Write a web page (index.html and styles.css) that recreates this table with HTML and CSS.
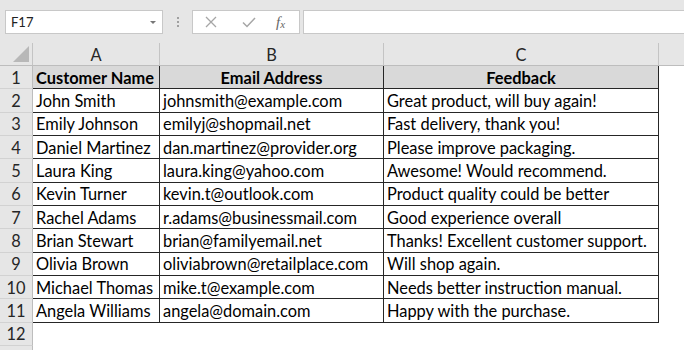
FILE: index.html
```html
<!DOCTYPE html>
<html>
<head>
<meta charset="utf-8">
<link rel="stylesheet" href="styles.css">
</head>
<body>
<div class="app">
  <div class="fbar">
    <div class="namebox"><span class="ref">F17</span><span class="caret"></span></div>
    <div class="grip"><i></i><i></i><i></i></div>
    <div class="btns">
      <svg class="ico" width="14" height="14" viewBox="0 0 14 14"><path d="M2 2L12 12M12 2L2 12" stroke="#a6a6a6" stroke-width="1.3" fill="none"/></svg>
      <svg class="ico" width="16" height="14" viewBox="0 0 16 14"><path d="M2 7.5L6 11.5L14 3" stroke="#a6a6a6" stroke-width="1.5" fill="none"/></svg>
      <span class="fx">f<sub>x</sub></span>
    </div>
    <div class="input"></div>
  </div>
  <div class="sheet">
    <div class="corner"><span class="tri"></span></div>
    <div class="ch">A</div><div class="ch">B</div><div class="ch">C</div><div class="ch last"></div>

    <div class="rh">1</div><div class="c hd">Customer Name</div><div class="c hd ctr">Email Address</div><div class="c hd ctr">Feedback</div><div class="e"></div>
    <div class="rh">2</div><div class="c">John Smith</div><div class="c">johnsmith@example.com</div><div class="c">Great product, will buy again!</div><div class="e"></div>
    <div class="rh">3</div><div class="c">Emily Johnson</div><div class="c">emilyj@shopmail.net</div><div class="c">Fast delivery, thank you!</div><div class="e"></div>
    <div class="rh">4</div><div class="c">Daniel Martinez</div><div class="c">dan.martinez@provider.org</div><div class="c">Please improve packaging.</div><div class="e"></div>
    <div class="rh">5</div><div class="c">Laura King</div><div class="c">laura.king@yahoo.com</div><div class="c">Awesome! Would recommend.</div><div class="e"></div>
    <div class="rh">6</div><div class="c">Kevin Turner</div><div class="c">kevin.t@outlook.com</div><div class="c">Product quality could be better</div><div class="e"></div>
    <div class="rh">7</div><div class="c">Rachel Adams</div><div class="c">r.adams@businessmail.com</div><div class="c">Good experience overall</div><div class="e"></div>
    <div class="rh">8</div><div class="c">Brian Stewart</div><div class="c">brian@familyemail.net</div><div class="c">Thanks! Excellent customer support.</div><div class="e"></div>
    <div class="rh">9</div><div class="c">Olivia Brown</div><div class="c">oliviabrown@retailplace.com</div><div class="c">Will shop again.</div><div class="e"></div>
    <div class="rh">10</div><div class="c">Michael Thomas</div><div class="c">mike.t@example.com</div><div class="c">Needs better instruction manual.</div><div class="e"></div>
    <div class="rh">11</div><div class="c">Angela Williams</div><div class="c">angela@domain.com</div><div class="c">Happy with the purchase.</div><div class="e"></div>
    <div class="rh">12</div><div class="blank"></div><div class="blank"></div><div class="blank"></div><div class="e"></div>
    <div class="rh"></div><div class="blank"></div><div class="blank"></div><div class="blank"></div><div class="e"></div>
  </div>
</div>
</body>
</html>
```
FILE: styles.css
```css
html, body {
  margin: 0;
  padding: 0;
  background: #ffffff;
  overflow: hidden;
}
.app {
  width: 684px;
  height: 350px;
  overflow: hidden;
  font-family: Lato, "Open Sans", sans-serif;
  background: #e6e6e6;
}
.fbar {
  height: 43px;
  box-sizing: border-box;
  padding-top: 10px;
  display: flex;
  align-items: flex-start;
}
.namebox {
  margin-left: 5px;
  width: 158px;
  height: 24px;
  box-sizing: border-box;
  background: #fff;
  border: 1px solid #c8c8c8;
  display: flex;
  align-items: center;
  justify-content: space-between;
  padding: 0 6px 0 5px;
  font-size: 13px;
  color: #222;
}
.caret {
  width: 0;
  height: 0;
  border-left: 3.5px solid transparent;
  border-right: 3.5px solid transparent;
  border-top: 3.5px solid #777;
}
.grip {
  width: 29px;
  height: 24px;
  display: flex;
  flex-direction: column;
  align-items: center;
  justify-content: center;
  gap: 2px;
}
.grip i {
  display: block;
  width: 2px;
  height: 2px;
  background: #a0a0a0;
}
.btns {
  width: 108px;
  height: 24px;
  box-sizing: border-box;
  background: #fff;
  border: 1px solid #c8c8c8;
  display: flex;
  align-items: center;
  padding-left: 11px;
}
.btns .ico:nth-child(1) { margin-right: 23px; }
.btns .ico:nth-child(2) { margin-right: 19px; }
.fx {
  font-family: "Liberation Serif", serif;
  font-style: italic;
  font-size: 15px;
  color: #666;
  line-height: 1;
}
.fx sub {
  font-size: 11px;
  vertical-align: -1px;
}
.input {
  margin-left: 3px;
  flex: 1;
  height: 24px;
  box-sizing: border-box;
  background: #fff;
  border: 1px solid #c8c8c8;
  border-right: none;
}
.sheet {
  display: grid;
  grid-template-columns: 33px 127px 224px 275px 25px;
  grid-template-rows: 23px repeat(13, 23.333px);
  background: #fff;
  font-size: 16.4px;
  color: #000;
}
.corner {
  background: #e6e6e6;
  border-right: 1px solid #c4c4c4;
  border-bottom: 1px solid #bdbdbd;
  position: relative;
}
.tri {
  position: absolute;
  right: 3px;
  bottom: 3px;
  width: 0;
  height: 0;
  border-left: 16px solid transparent;
  border-bottom: 16px solid #b8b8b8;
}
.ch {
  background: #e6e6e6;
  border-right: 1px solid #c4c4c4;
  border-bottom: 1px solid #bdbdbd;
  display: flex;
  align-items: flex-end;
  justify-content: center;
  padding-bottom: 1px;
  color: #262626;
  font-size: 16.4px;
}
.ch.last { border-right: none; }
.rh {
  background: #e6e6e6;
  border-right: 1px solid #bdbdbd;
  border-bottom: 1px solid #d2d2d2;
  display: flex;
  align-items: center;
  justify-content: center;
  color: #262626;
  font-size: 16.4px;
}
.c {
  border-right: 1px solid #262626;
  border-bottom: 1px solid #262626;
  display: flex;
  align-items: center;
  padding-left: 3px;
  white-space: nowrap;
  overflow: hidden;
}
.hd {
  background: #d9d9d9;
  font-weight: bold;
}
.ctr { justify-content: center; padding-left: 0; }
```
